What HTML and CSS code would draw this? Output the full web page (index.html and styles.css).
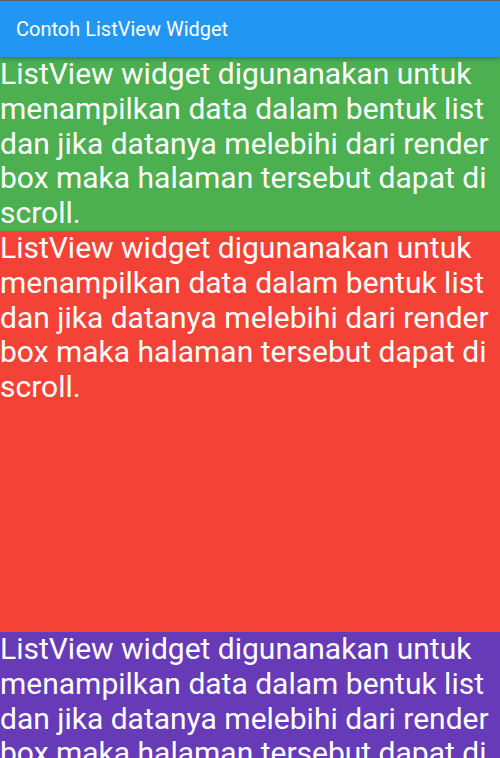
FILE: index.html
```html
<!DOCTYPE html>
<html>
<head>
<meta charset="utf-8">
<link rel="stylesheet" href="styles.css">
</head>
<body>
<div class="status"></div>
<header class="appbar"><span class="title">Contoh ListView Widget</span></header>
<main class="list">
  <div class="item green">ListView widget digunanakan untuk menampilkan data dalam bentuk list dan jika datanya melebihi dari render box maka halaman tersebut dapat di scroll.</div>
  <div class="item red tall">ListView widget digunanakan untuk menampilkan data dalam bentuk list dan jika datanya melebihi dari render box maka halaman tersebut dapat di scroll.</div>
  <div class="item purple">ListView widget digunanakan untuk menampilkan data dalam bentuk list dan jika datanya melebihi dari render box maka halaman tersebut dapat di scroll.</div>
</main>
</body>
</html>
```
FILE: styles.css
```css
html, body {
  margin: 0;
  padding: 0;
  overflow: hidden;
  height: 758px;
  font-family: Roboto, "Liberation Sans", sans-serif;
}
.status {
  height: 1px;
  background: #5f6368;
}
.appbar {
  position: relative;
  z-index: 2;
  height: 56px;
  background: #2196f3;
  display: flex;
  align-items: center;
  padding-left: 16px;
  box-shadow: 0 2px 4px rgba(0,0,0,0.25);
}
.title {
  color: #fff;
  font-size: 20px;
  font-weight: 400;
}
.list {
  display: flex;
  flex-direction: column;
}
.item {
  color: #fff;
  font-size: 30px;
  line-height: 34.8px;
}
.green { background: #4caf50; }
.red { background: #f44336; }
.tall { height: 401px; }
.purple { background: #673ab7; }
```
